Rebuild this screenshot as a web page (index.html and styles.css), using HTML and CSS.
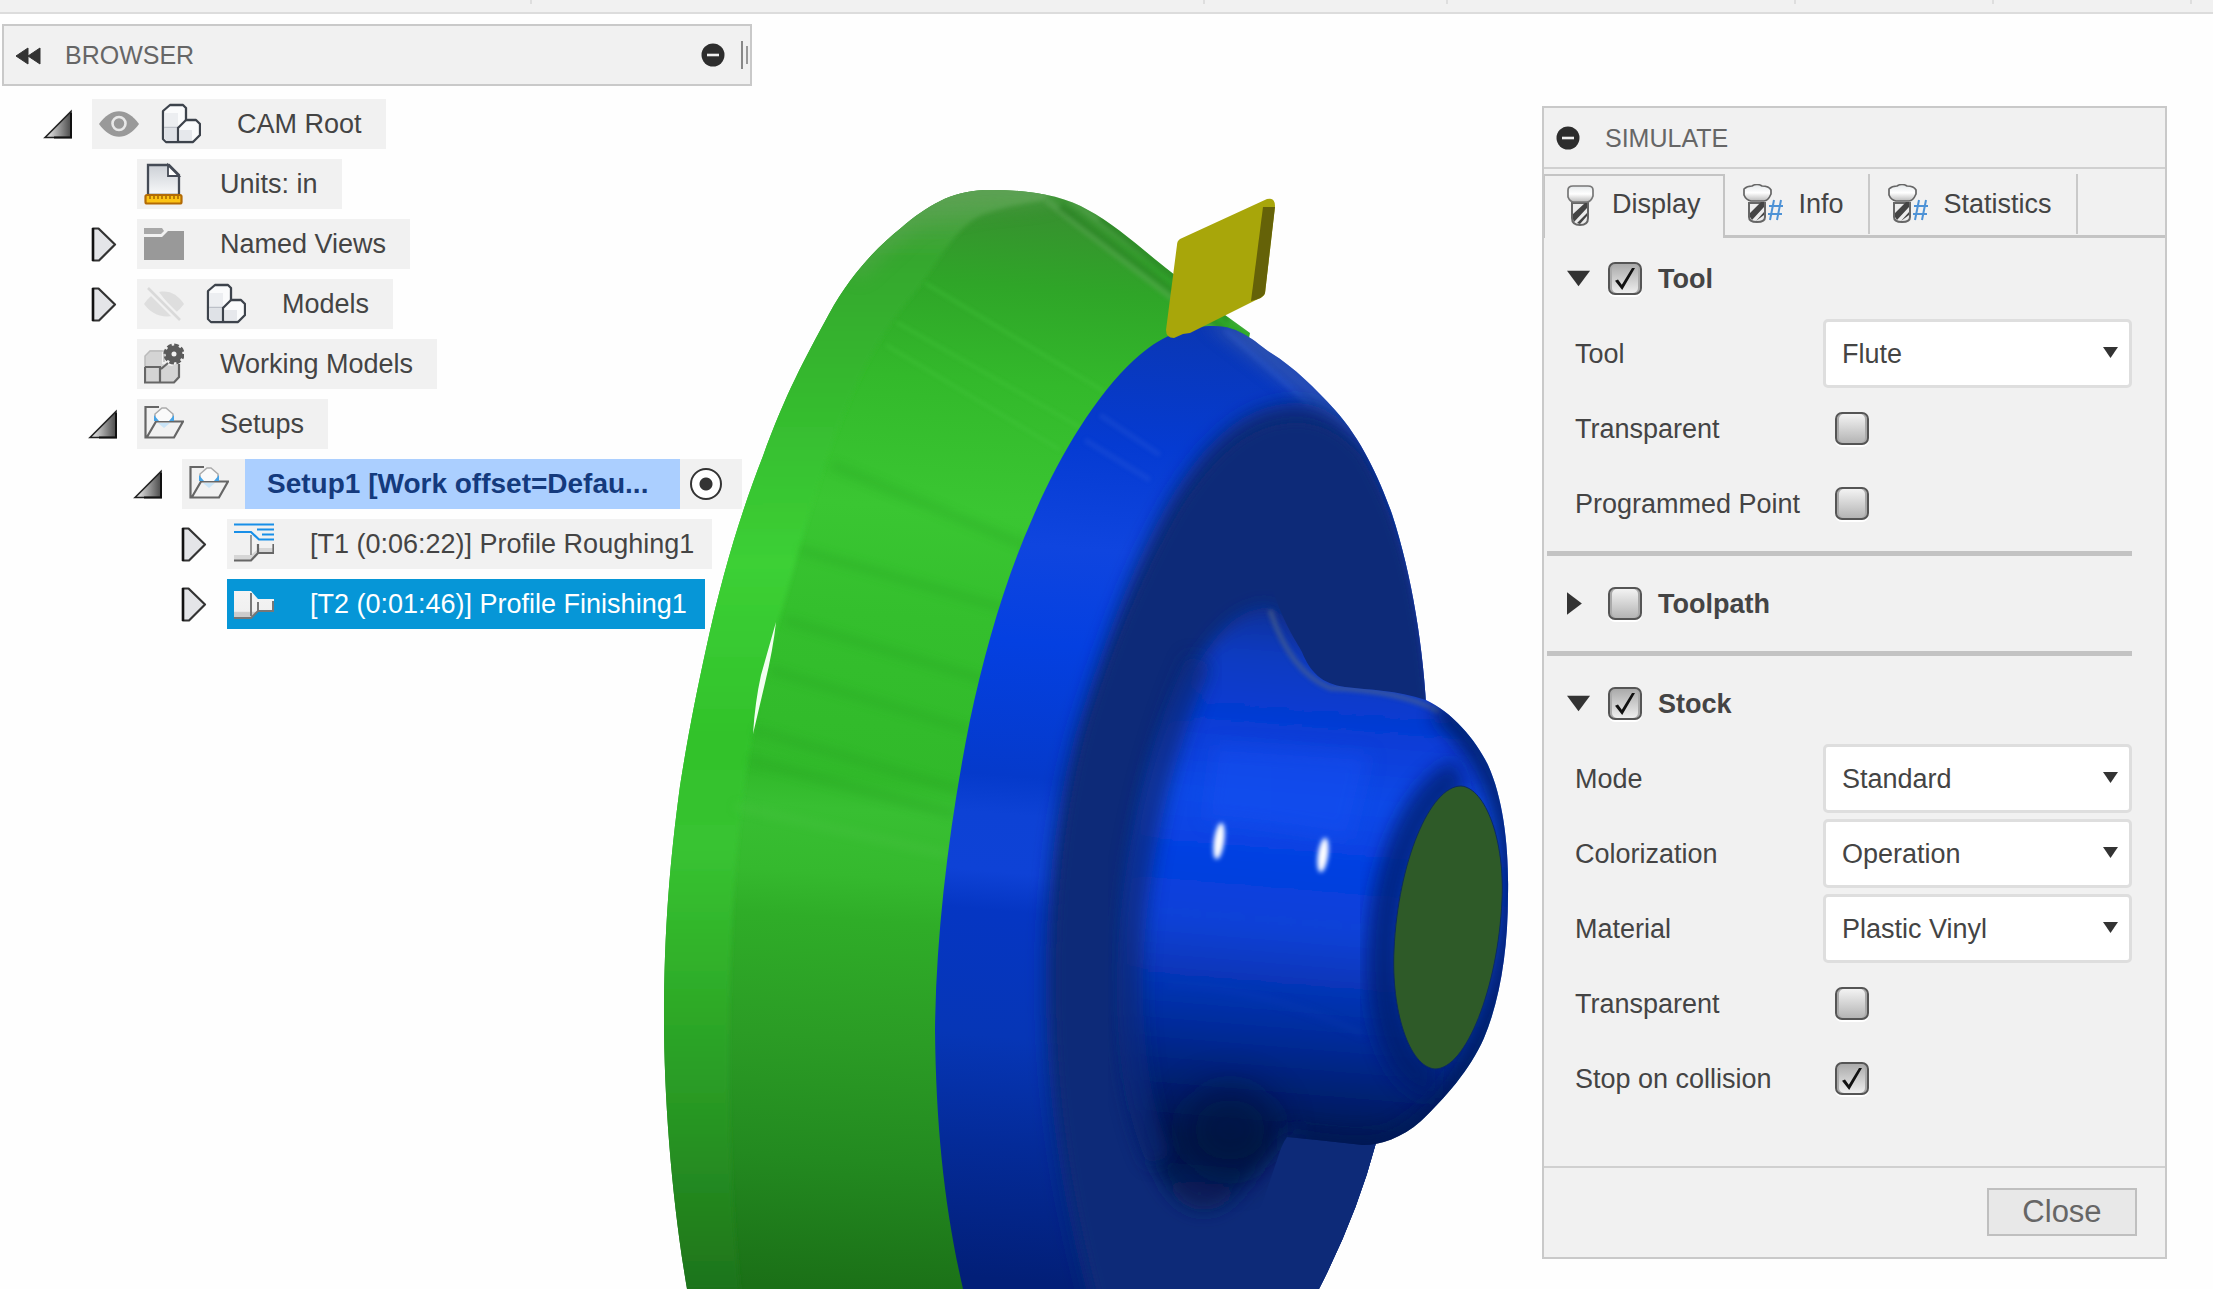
FILE: index.html
```html
<!DOCTYPE html>
<html lang="en">
<head>
<meta charset="utf-8">
<title>CAM Simulation</title>
<link rel="stylesheet" href="styles.css">
</head>
<body>
<svg class="defs" width="0" height="0" aria-hidden="true">
  <defs>
    <linearGradient id="metal" x1="0" y1="0" x2="1" y2="0"><stop offset=".2" stop-color="#d5d5d5"/><stop offset="1" stop-color="#4a4a4a"/></linearGradient>
    <linearGradient id="page" x1="0" y1="0" x2="0" y2="1"><stop offset="0" stop-color="#ccd0d6"/><stop offset="1" stop-color="#f8f9fa"/></linearGradient>
    <linearGradient id="shank" x1="0" y1="0" x2="0" y2="1"><stop offset="0" stop-color="#e4e8ea"/><stop offset=".5" stop-color="#fff"/><stop offset="1" stop-color="#bbb"/></linearGradient>
    <linearGradient id="solid" x1="0" y1="0" x2="0" y2="1"><stop offset="0" stop-color="#f4f4f4"/><stop offset=".75" stop-color="#f0f0f0"/><stop offset=".8" stop-color="#ccc"/><stop offset="1" stop-color="#ccc"/></linearGradient>
  </defs>
  <symbol id="open" viewBox="0 0 45 50"><path d="M3 38.500 29 12.500V38.500Z" fill="url(#metal)" stroke="#222" stroke-width="1.600"/><path d="M29 14V38.500H12" fill="none" stroke="#111" stroke-width="2"/></symbol>
  <symbol id="closed" viewBox="0 0 45 50"><path d="M6 9.500H11.500L28 25.500 12 41.500H6Z" fill="#e4e5e8" stroke="#333" stroke-width="2.200" stroke-linejoin="round"/><path d="M6 9V42" stroke="#111" stroke-width="2.500"/></symbol>
  <symbol id="eye" viewBox="0 0 40 50"><path d="M0 25C12 8 28 8 40 25 28 42 12 42 0 25Z" fill="#999"/><circle cx="20" cy="24.500" r="6.500" fill="#999" stroke="#e8e8e8" stroke-width="2.600"/></symbol>
  <symbol id="eye-off" viewBox="0 0 40 50"><path d="M0 25C4 19 8 16 12 14L29 37C15 39 7 34 0 25ZM15 13C26 11 34 16 40 25 37 29 34 32 31 34Z" fill="#dedede"/><path d="M4 9 36 41" stroke="#f1f1f1" stroke-width="7"/><path d="M4 9 36 41" stroke="#d9d9d9" stroke-width="2.500"/></symbol>
  <symbol id="cube" viewBox="0 0 40 50"><path d="M2 12 9 6H22L25 9V21H35L39 25V36L32 43H5L2 40Z" fill="#fafbfc" stroke="#3d434c" stroke-width="2.300" stroke-linejoin="round"/><path d="M3.500 14H17V28L16 41.500H5L3.500 40Z" fill="#eceef1"/><path d="M3.500 30H16V41.500H5L3.500 40Z" fill="#dfe2e7"/><path d="M3 28.500H17" stroke="#bcc0c8" stroke-width="1.500"/><path d="M18.500 31H31V41.500H18.500Z" fill="#e6e8ec"/><path d="M17 43V29L25 21" fill="none" stroke="#3d434c" stroke-width="2.200"/></symbol>
  <symbol id="units" viewBox="0 0 40 50"><path d="M4 6H25L35 16V36H4Z" fill="url(#page)" stroke="#454b56" stroke-width="2.300"/><path d="M24 6V17H35Z" fill="#fff" stroke="#454b56" stroke-width="1.800"/><rect x="1.500" y="36" width="36" height="8.500" rx="1.500" fill="#fcc416" stroke="#b36b05" stroke-width="2.200"/><path d="M6 37V40M10 37V40M14 37V40M18 37V40M22 37V40M26 37V40M30 37V40M34 37V40" stroke="#a66500" stroke-width="1.500"/></symbol>
  <symbol id="folder" viewBox="0 0 40 50"><path d="M0 9H18L20 12 17 15H0Z" fill="#a8a8a8"/><path d="M0 18H18L24 12H40V41H0Z" fill="#999"/></symbol>
  <symbol id="working" viewBox="0 0 40 50"><path d="M1 17 6 11H18V25L28 27 35 23V37L30 43H1Z" fill="#d4d4d4"/><path d="M1 28V17L6 12H20V23" fill="none" stroke="#bbb" stroke-width="1.500"/><path d="M1 28H16V43M1 28V43.500H30L35 38V25M17 30 24 24" fill="none" stroke="#666" stroke-width="2.200"/><circle cx="30" cy="15" r="5.500" fill="none" stroke="#5b5b5b" stroke-width="6"/><circle cx="30" cy="15" r="8.800" fill="none" stroke="#5b5b5b" stroke-width="3.500" stroke-dasharray="4.500 2.400"/></symbol>
  <symbol id="setup" viewBox="0 0 40 50"><path d="M15 8H1.500V38.500H30L39 22.500H12L3 38" fill="none" stroke="#666" stroke-width="2.200"/><path d="M11 22V15L18 9H22L29 15V22" fill="#fafafa" stroke="#aaa" stroke-width="1.500"/><path d="M10 16 15 22H10ZM30 16 25 22H30Z" fill="#48a4e6"/><path d="M14 24H26L20 29Z" fill="#c9e4f7"/></symbol>
  <symbol id="roughing" viewBox="0 0 40 50"><path d="M0 5.500H40M0 13H17L25 20.500H40M23 10.500H40M28 15.500H40" fill="none" stroke="#188fe8" stroke-width="2.200"/><path d="M0 36H17L23 31V34L17 41H0Z" fill="#d6d6d6"/><path d="M24 29H39V33H24Z" fill="#d6d6d6"/><path d="M17 16V36" stroke="#999" stroke-width="2"/><path d="M0 41.500H17L24 34H40M24 25V34M39.500 25V34" fill="none" stroke="#666" stroke-width="2.200"/></symbol>
  <symbol id="finishing" viewBox="0 0 40 50"><path d="M0 12H17L24 20H40V32H24L17 39H0Z" fill="url(#solid)"/><path d="M17 14V37M0 39H17L24 32H40M24 23V32M39 22V31" fill="none" stroke="#777" stroke-width="2"/></symbol>
  <symbol id="minus" viewBox="0 0 24 24"><circle cx="12" cy="12" r="11.500" fill="#2d2d2d"/><path d="M6 12H18" stroke="#f0f0f0" stroke-width="2.600"/></symbol>
  <symbol id="tool" viewBox="0 0 30 44"><path d="M6 19V34Q6 41 14 41T22 34V19Z" fill="#ececec" stroke="#666" stroke-width="2"/><path d="M7 35V30L19 19H21V24L8 38ZM11 39 21 29V32L14 40Z" fill="#444"/><path d="M2 6Q2 2 7 2H22Q27 2 27 6V12Q25 18 21 18H8Q4 18 2 13Z" fill="url(#shank)" stroke="#777" stroke-width="1.700"/></symbol>
  <symbol id="tool-data" viewBox="0 0 40 44"><path d="M6 19V33Q6 38 14 38T22 33V19Z" fill="#ececec" stroke="#666" stroke-width="2"/><path d="M7 33V29L18 18H21V23L9 36ZM13 37 21 28V31Z" fill="#444"/><path d="M1 5Q4 2 9 2 14-1 19 2 26 2 28 6V10Q25 17 21 17H8Q3 16 1 11Z" fill="url(#shank)" stroke="#666" stroke-width="1.700"/><path d="M31 16 27 36M38 16 34 36M26 22H40M25 30H39" stroke="#4d92d6" stroke-width="2"/></symbol>
</svg>

<div class="toolbar" aria-hidden="true"><i></i><i></i><i></i><i></i><i></i><i></i></div>

<svg class="scene" viewBox="0 0 2213 1289" preserveAspectRatio="xMinYMin slice" role="img" aria-label="Stock model with turning tool">
  <defs>
    <linearGradient id="green" gradientUnits="userSpaceOnUse" x1="900" y1="200" x2="820" y2="1289">
      <stop offset="0" stop-color="#37912f"/><stop offset=".07" stop-color="#2fa528"/><stop offset=".16" stop-color="#33b92b"/><stop offset=".28" stop-color="#3ac632"/><stop offset=".38" stop-color="#34bf2d"/><stop offset=".53" stop-color="#31b92a"/><stop offset=".56" stop-color="#38bf32"/><stop offset=".62" stop-color="#35b92e"/><stop offset=".66" stop-color="#2fad28"/><stop offset=".77" stop-color="#2b9c25"/><stop offset=".88" stop-color="#238a20"/><stop offset="1" stop-color="#1b7017"/>
    </linearGradient>
    <linearGradient id="rim" gradientUnits="userSpaceOnUse" x1="0" y1="190" x2="0" y2="1289">
      <stop offset="0" stop-color="#5a9f51"/><stop offset=".06" stop-color="#36a72e"/><stop offset=".2" stop-color="#36bc2f"/><stop offset=".34" stop-color="#3cd035"/><stop offset=".5" stop-color="#32c22b"/><stop offset=".6" stop-color="#38c331"/><stop offset=".72" stop-color="#2fae29"/><stop offset=".86" stop-color="#279323"/><stop offset="1" stop-color="#1e741a"/>
    </linearGradient>
    <linearGradient id="band" gradientUnits="userSpaceOnUse" x1="1200" y1="326" x2="1120" y2="1289">
      <stop offset="0" stop-color="#0a37b4"/><stop offset=".13" stop-color="#053bd2"/><stop offset=".24" stop-color="#0f45df"/><stop offset=".34" stop-color="#0440e1"/><stop offset=".48" stop-color="#053acb"/><stop offset=".52" stop-color="#0d42d5"/><stop offset=".58" stop-color="#0e42d6"/><stop offset=".62" stop-color="#0536c3"/><stop offset=".75" stop-color="#0636b6"/><stop offset=".86" stop-color="#042b99"/><stop offset="1" stop-color="#021f78"/>
    </linearGradient>
    <linearGradient id="hub" gradientUnits="userSpaceOnUse" x1="1290" y1="600" x2="1240" y2="1200">
      <stop offset="0" stop-color="#0c2f90"/><stop offset=".09" stop-color="#083abf"/><stop offset=".2" stop-color="#063bd4"/><stop offset=".33" stop-color="#0c49e8"/><stop offset=".45" stop-color="#043fe0"/><stop offset=".54" stop-color="#0c42d8"/><stop offset=".62" stop-color="#0737bd"/><stop offset=".72" stop-color="#032b9a"/><stop offset=".82" stop-color="#021f6e"/><stop offset=".91" stop-color="#021447"/><stop offset="1" stop-color="#08215c"/>
    </linearGradient>
    <filter id="soft4" x="-20%" y="-20%" width="140%" height="140%"><feGaussianBlur stdDeviation="4"/></filter>
    <filter id="soft9" x="-30%" y="-30%" width="160%" height="160%"><feGaussianBlur stdDeviation="9"/></filter>
    <filter id="soft18" x="-60%" y="-60%" width="220%" height="220%"><feGaussianBlur stdDeviation="18"/></filter>
    <filter id="soft1" x="-60%" y="-20%" width="220%" height="140%"><feGaussianBlur stdDeviation="2"/></filter>
    <path id="green-shape" d="M687 1289C672 1200 664 1100 664 1019 664 930 670 860 680 786 688 735 696 695 706 649 722 575 740 515 763 456 785 395 805 358 829 314 851 274 878 246 901 228 928 205 950 192 984 190C1020 189 1062 194 1088 210C1115 224 1145 252 1171 272L1225 315 1250 333 1200 600 1000 1289Z"/>
    <path id="blue-shape" d="M963 1289C945 1210 936 1130 935 1030 936 930 950 820 970 720 985 650 1005 580 1033 517 1058 458 1095 396 1134 360 1160 336 1185 326 1214 326 1240 326 1255 342 1271 353 1295 368 1315 388 1335 410 1362 440 1380 480 1392 514 1412 575 1424 650 1427 720L1420 1000 1376 1143Q1357 1215 1319 1289Z"/>
    <clipPath id="green-clip"><use href="#green-shape"/></clipPath>
    <clipPath id="blue-clip"><use href="#blue-shape"/></clipPath>
    <clipPath id="hub-clip"><path d="M1040 540H1262C1272 610 1296 640 1302 652C1310 672 1322 684 1345 687C1370 690 1396 690 1426 700C1452 712 1476 740 1488 765 1504 800 1509 850 1508 895 1508 950 1500 1000 1484 1038 1470 1070 1445 1098 1421 1121 1402 1138 1380 1145 1363 1145L1317 1140 1287 1137Q1282 1143 1277 1160L1250 1240H1040Z"/></clipPath>
  </defs>
  <use href="#green-shape" fill="url(#green)"/>
  <g clip-path="url(#green-clip)">
    <path d="M640 1289V150H1060L1046 200Q1010 205 984 214C958 224 940 258 921 285 890 320 868 356 847 406 828 450 810 510 795 564 781 615 766 660 755 720 744 780 736 840 732 925 726 1040 728 1180 740 1289Z" fill="url(#rim)" filter="url(#soft1)"/>
    <g fill="none" opacity=".4" filter="url(#soft1)">
      <path d="M1046 200 1240 350M1070 200 1250 330" stroke="#68ad60" stroke-width="7"/>
      <path d="M1060 206 1240 342M1100 218 1230 320" stroke="#277a23" stroke-width="7"/>
      <path d="M925 283 1105 392M896 322 1085 430M886 345 1060 450" stroke="#4acb42" stroke-width="3"/>
    </g>
    <g fill="none" opacity=".3" filter="url(#soft4)">
      <path d="M832 465 1035 550M800 550 1010 610M785 620 985 680M770 670 970 730" stroke="#25a521" stroke-width="10"/>
      <path d="M755 730 960 790M750 760 955 815" stroke="#27a321" stroke-width="10"/>
      <path d="M734 806 950 855" stroke="#4bc544" stroke-width="8"/>
    </g>
    <path d="M680 120H1080V192L1046 205 984 212 920 225 860 280Z" fill="#63a65a" opacity=".35" filter="url(#soft9)"/>
  </g>
  <path d="M776 622Q773 650 765 683L753 734Q755 702 761 675Z" fill="#f2fff0"/>
  <use href="#blue-shape" fill="url(#band)"/>
  <g clip-path="url(#blue-clip)">
    <path d="M1205 320 1250 325 1330 395 1380 460 1350 440 1290 385Z" fill="#4c68aa" opacity=".6" filter="url(#soft9)"/>
    <path d="M1225 330 1310 405M1100 415 1160 455M1085 440 1150 480" fill="none" stroke="#3b66dc" stroke-width="5" opacity=".25" filter="url(#soft1)"/>
    <path d="M1295 403Q1335 402 1372 455C1412 540 1422 640 1430 720L1450 1000 1340 1310H1092C1062 1200 1046 1100 1046 982 1046 900 1055 800 1080 719 1102 650 1130 570 1168 503 1205 440 1245 404 1295 403Z" fill="#0f2c78" filter="url(#soft9)"/>
    <path d="M1295 423Q1330 422 1360 455C1412 540 1422 640 1430 720L1450 1000 1340 1310H1102C1072 1200 1056 1100 1056 982 1056 900 1065 800 1090 719 1112 650 1140 580 1178 513 1215 455 1250 424 1295 423Z" fill="#0f2c78" filter="url(#soft4)"/>
  </g>
  <g clip-path="url(#hub-clip)">
    <path d="M1254 610C1215 620 1178 690 1156 760 1132 840 1122 930 1127 1040 1130 1110 1146 1155 1165 1185 1185 1215 1215 1220 1240 1190 1262 1170 1280 1130 1300 1130V1170H1540V660H1330Q1300 650 1290 625 1272 600 1254 610Z" fill="url(#hub)" filter="url(#soft9)"/>
    <path d="M1200 660C1150 770 1122 920 1132 1040 1136 1090 1146 1130 1160 1160" fill="none" stroke="#0d2c7c" stroke-width="26" opacity=".7" filter="url(#soft9)"/>
    <ellipse cx="1230" cy="1130" rx="48" ry="44" fill="#021440" opacity=".7" filter="url(#soft18)"/>
    <path d="M1270 610Q1290 672 1330 688 1400 690 1440 712" fill="none" stroke="#536887" stroke-width="5" opacity=".6" filter="url(#soft1)"/>
    <path d="M1440 708C1500 760 1516 830 1512 910 1504 1020 1460 1110 1390 1144 1350 1152 1310 1144 1285 1138" fill="none" stroke="#061a58" stroke-width="24" opacity=".8" filter="url(#soft9)"/>
    <path d="M1461 775C1420 790 1384 870 1384 960 1384 1030 1405 1080 1435 1082" fill="none" stroke="#041e6a" stroke-width="34" opacity=".75" filter="url(#soft9)"/>
    <path d="M1215 745Q1300 750 1370 755L1350 840Q1280 825 1205 820Z" fill="#1450f2" opacity=".5" filter="url(#soft9)"/>
    <path d="M1165 985Q1260 985 1365 1035" fill="none" stroke="#1747c6" stroke-width="5" opacity=".2" filter="url(#soft4)"/>
  </g>
  <path d="M1461 786C1486 788 1505 842 1502 900C1498 988 1466 1069 1435 1069C1409 1067 1391 1010 1394 950C1398 862 1430 786 1461 786Z" fill="#2e5a28" stroke="#0b2b62" stroke-width="1"/>
  <g filter="url(#soft1)"><ellipse cx="1219" cy="841" rx="5" ry="18" transform="rotate(8 1219 841)" fill="#fff" stroke="#77a8ff" stroke-width="2"/><ellipse cx="1323" cy="855" rx="5" ry="17" transform="rotate(8 1323 855)" fill="#fff" stroke="#77a8ff" stroke-width="2"/></g>
  <path d="M1180 239 1267 199Q1275 197 1275 206L1265 293Q1264 297 1258 299L1190 333 1183 334 1174 338Q1166 338 1166 330L1177 245Q1177 241 1180 239Z" fill="#a8a60a"/>
  <path d="M1263 207H1275L1265 293Q1264 298 1251 301Z" fill="#656208"/>
</svg>

<main class="workspace">
  <section class="browser" aria-label="Browser">
    <header class="panel-head browser-head">
      <button class="icon-button" aria-label="Collapse browser"><svg width="26" height="24" viewBox="0 0 26 24"><path d="M1 13 13 5V21ZM13 13 25 5V21Z" fill="#333" stroke="#333" stroke-linejoin="round"/></svg></button>
      <h2>BROWSER</h2>
      <button class="icon-button" aria-label="Hide browser"><svg width="24" height="24"><use href="#minus"/></svg></button>
      <span class="grip"></span>
    </header>
    <ul class="tree">
      <li>
        <div class="row"><button class="expander" aria-label="Collapse"><svg><use href="#open"/></svg></button><div class="node"><svg><use href="#eye"/></svg><svg><use href="#cube"/></svg><span>CAM Root</span></div></div>
        <ul>
          <li><div class="row leaf"><div class="node"><svg><use href="#units"/></svg><span>Units: in</span></div></div></li>
          <li><div class="row"><button class="expander" aria-label="Expand"><svg><use href="#closed"/></svg></button><div class="node"><svg><use href="#folder"/></svg><span>Named Views</span></div></div></li>
          <li><div class="row"><button class="expander" aria-label="Expand"><svg><use href="#closed"/></svg></button><div class="node"><svg><use href="#eye-off"/></svg><svg><use href="#cube"/></svg><span>Models</span></div></div></li>
          <li><div class="row leaf"><div class="node"><svg><use href="#working"/></svg><span>Working Models</span></div></div></li>
          <li>
            <div class="row"><button class="expander" aria-label="Collapse"><svg><use href="#open"/></svg></button><div class="node"><svg><use href="#setup"/></svg><span>Setups</span></div></div>
            <ul>
              <li>
                <div class="row"><button class="expander" aria-label="Collapse"><svg><use href="#open"/></svg></button><div class="node active-setup"><svg><use href="#setup"/></svg><span class="setup-name">Setup1 [Work offset=Defau...</span><input class="setup-radio" type="radio" name="setup" aria-label="Activate Setup1" checked></div></div>
                <ul>
                  <li><div class="row"><button class="expander" aria-label="Expand"><svg><use href="#closed"/></svg></button><div class="node operation"><svg><use href="#roughing"/></svg><span>[T1 (0:06:22)] Profile Roughing1</span></div></div></li>
                  <li><div class="row"><button class="expander" aria-label="Expand"><svg><use href="#closed"/></svg></button><div class="node operation selected"><svg><use href="#finishing"/></svg><span>[T2 (0:01:46)] Profile Finishing1</span></div></div></li>
                </ul>
              </li>
            </ul>
          </li>
        </ul>
      </li>
    </ul>
  </section>

  <section class="simulate" aria-label="Simulate">
    <header class="panel-head simulate-head">
      <button class="icon-button" aria-label="Collapse panel"><svg width="24" height="24"><use href="#minus"/></svg></button>
      <h2>SIMULATE</h2>
    </header>
    <div class="tabs" role="tablist">
      <button class="tab current" role="tab" aria-selected="true"><svg width="30" height="44"><use href="#tool"/></svg>Display</button>
      <button class="tab" role="tab" aria-selected="false"><svg width="40" height="44"><use href="#tool-data"/></svg>Info</button>
      <button class="tab" role="tab" aria-selected="false"><svg width="40" height="44"><use href="#tool-data"/></svg>Statistics</button>
    </div>
    <div class="settings">
      <div class="group"><button class="twist down" aria-label="Collapse Tool"></button><input type="checkbox" id="g-tool" checked><label for="g-tool">Tool</label></div>
      <div class="field"><label for="tool-part">Tool</label><span class="pick"><select id="tool-part"><option>Flute</option></select></span></div>
      <div class="field"><label for="tool-clear">Transparent</label><input type="checkbox" id="tool-clear"></div>
      <div class="field"><label for="point">Programmed Point</label><input type="checkbox" id="point"></div>
      <hr>
      <div class="group"><button class="twist" aria-label="Expand Toolpath"></button><input type="checkbox" id="g-path"><label for="g-path">Toolpath</label></div>
      <hr>
      <div class="group"><button class="twist down" aria-label="Collapse Stock"></button><input type="checkbox" id="g-stock" checked><label for="g-stock">Stock</label></div>
      <div class="field"><label for="mode">Mode</label><span class="pick"><select id="mode"><option>Standard</option></select></span></div>
      <div class="field"><label for="color">Colorization</label><span class="pick"><select id="color"><option>Operation</option></select></span></div>
      <div class="field"><label for="material">Material</label><span class="pick"><select id="material"><option>Plastic Vinyl</option></select></span></div>
      <div class="field"><label for="stock-clear">Transparent</label><input type="checkbox" id="stock-clear"></div>
      <div class="field"><label for="collision">Stop on collision</label><input type="checkbox" id="collision" checked></div>
    </div>
    <footer class="actions"><button class="close">Close</button></footer>
  </section>
</main>
</body>
</html>
```
FILE: styles.css
```css
* { box-sizing: border-box; }

body {
  position: relative;
  min-height: 100vh;
  margin: 0;
  overflow: hidden;
  background: #fefefe;
  color: #444;
  font: 27px/32px "Liberation Sans", Arial, sans-serif;
}

button {
  padding: 0;
  border: 0;
  background: none;
  color: inherit;
  font: inherit;
}

svg { display: block; flex: none; }
.defs { position: absolute; }

/* Bottom edge of the application toolbar */
.toolbar {
  display: grid;
  grid-template-columns: 532fr 673fr 243fr 348fr 198fr 198fr 21fr;
  height: 14px;
  border-bottom: 2px solid #dcdcdc;
  background: #f1f1f1;
}
.toolbar i { height: 4px; border-right: 2px solid #dedede; }

.scene {
  position: absolute;
  inset: 0;
  width: 100%;
  height: 100%;
}

.workspace {
  position: relative;
  display: flex;
  justify-content: space-between;
  align-items: flex-start;
  padding: 10px 46px 0 2px;
}

/* Panel headings */
.panel-head {
  display: flex;
  align-items: center;
  height: 62px;
  background: #f1f1f1;
}
.panel-head h2 {
  margin: 0;
  color: #666;
  font-size: 25px;
  font-weight: 400;
}
.icon-button { flex: none; }

/* Browser tree */
.browser { width: 750px; }
.browser-head {
  padding: 0 2px 0 11px;
  border: 2px solid #c9c9c9;
}
.browser-head h2 { flex: 1; margin-left: 24px; }
.grip {
  display: flex;
  align-items: center;
  width: 7px;
  height: 28px;
  margin-left: 16px;
  border-left: 2px solid #888;
}
.grip::after {
  content: "";
  width: 2px;
  height: 18px;
  margin-left: 3px;
  background: #999;
}

.tree, .tree ul { margin: 0; padding: 0; list-style: none; }
.tree { padding: 13px 0 0 40px; }
.tree ul { padding-left: 45px; }
.row { display: flex; height: 50px; margin-bottom: 10px; }
.leaf { padding-left: 50px; }
.expander { width: 50px; height: 50px; }
.expander svg { width: 45px; height: 50px; }
.node {
  display: flex;
  align-items: center;
  padding: 0 24px 0 7px;
  background: #f1f1f1;
  white-space: nowrap;
}
.node svg { width: 40px; height: 50px; }
.node svg + svg { margin-left: 22px; }
.node span { margin-left: 36px; }
.operation { padding-right: 18px; }
.selected { background: #0696d7; color: #fff; }
.active-setup { padding-right: 20px; }
.node .setup-name {
  width: 435px;
  margin: 0 10px 0 16px;
  padding: 0 22px;
  overflow: hidden;
  background: #abcfff;
  color: #143a7d;
  font-size: 28px;
  font-weight: 700;
  line-height: 50px;
}
.setup-radio {
  appearance: none;
  width: 32px;
  height: 32px;
  margin: 0;
  border: 2px solid #333;
  border-radius: 50%;
  background: radial-gradient(circle, #333 6px, #fff 7px);
}

/* Simulate dialog */
.simulate {
  width: 625px;
  margin-top: 82px;
  border: 2px solid #c9c9c9;
  background: #f1f1f1;
}
.simulate-head {
  gap: 25px;
  height: 61px;
  padding: 0 12px;
  border-bottom: 2px solid #d0d0d0;
}
.tabs {
  display: flex;
  height: 69px;
  padding-top: 5px;
  background: linear-gradient(#c4c4c4, #c4c4c4) bottom / 100% 3px no-repeat;
}
.tab {
  display: flex;
  align-items: center;
  gap: 16px;
  height: 60px;
  padding: 0 24px 0 18px;
  border-right: 2px solid #c9c9c9;
}
.tab svg { margin-top: 4px; }
.tab.current {
  height: 64px;
  padding: 0 22px 6px 21px;
  border: solid #c4c4c4;
  border-width: 2px 2px 0 1px;
  background: #f1f1f1;
}

.settings { padding: 3px 33px 50px 3px; }
.group, .field {
  display: flex;
  align-items: center;
  height: 75px;
}
.group { padding-left: 20px; font-weight: 700; }
.group label { margin-left: 16px; }
.field { padding-left: 28px; }
.field > label { flex: none; width: 248px; }
.twist {
  width: 24px;
  height: 28px;
  margin-right: 17px;
  background: #333;
  clip-path: polygon(0 10%, 62% 50%, 0 90%);
}
.twist.down { clip-path: polygon(0 22%, 96% 22%, 48% 78%); }
hr {
  height: 5px;
  margin: 10px 0;
  border: 0;
  background: #c3c3c3;
}

input[type="checkbox"] {
  appearance: none;
  width: 34px;
  height: 33px;
  margin: 0;
  padding: 4px 5px;
  border: 2px solid #555;
  border-radius: 7px;
  background: linear-gradient(#f3f3f3, #b4b4b4);
  box-shadow: 0 2px 0 #fff, inset 2px 0 #aaa, inset -2px 0 #aaa;
}
.field input[type="checkbox"] { margin-left: 12px; }
input[type="checkbox"]:checked { background: linear-gradient(#aaa, #eee); }
input[type="checkbox"]:checked::after {
  content: "";
  display: block;
  width: 20px;
  height: 22px;
  background: #111;
  clip-path: polygon(0 58%, 15% 52%, 34% 76%, 85% 0, 100% 0, 36% 100%);
}

.pick { position: relative; flex: 1; }
.pick::after {
  content: "";
  position: absolute;
  top: 28px;
  right: 14px;
  width: 15px;
  height: 11px;
  background: #333;
  clip-path: polygon(0 0, 100% 0, 50% 100%);
  pointer-events: none;
}
select {
  appearance: none;
  display: block;
  width: 100%;
  height: 69px;
  padding: 0 16px;
  border: 3px solid #dedede;
  border-radius: 5px;
  background: #fff;
  color: inherit;
  font: inherit;
}

.actions {
  display: flex;
  justify-content: flex-end;
  padding: 20px 28px 21px 0;
  border-top: 2px solid #d0d0d0;
}
.close {
  width: 150px;
  height: 48px;
  border: 2px solid #bfbfbf;
  background: #e8e8e8;
  color: #666;
  font-size: 31px;
}
```
